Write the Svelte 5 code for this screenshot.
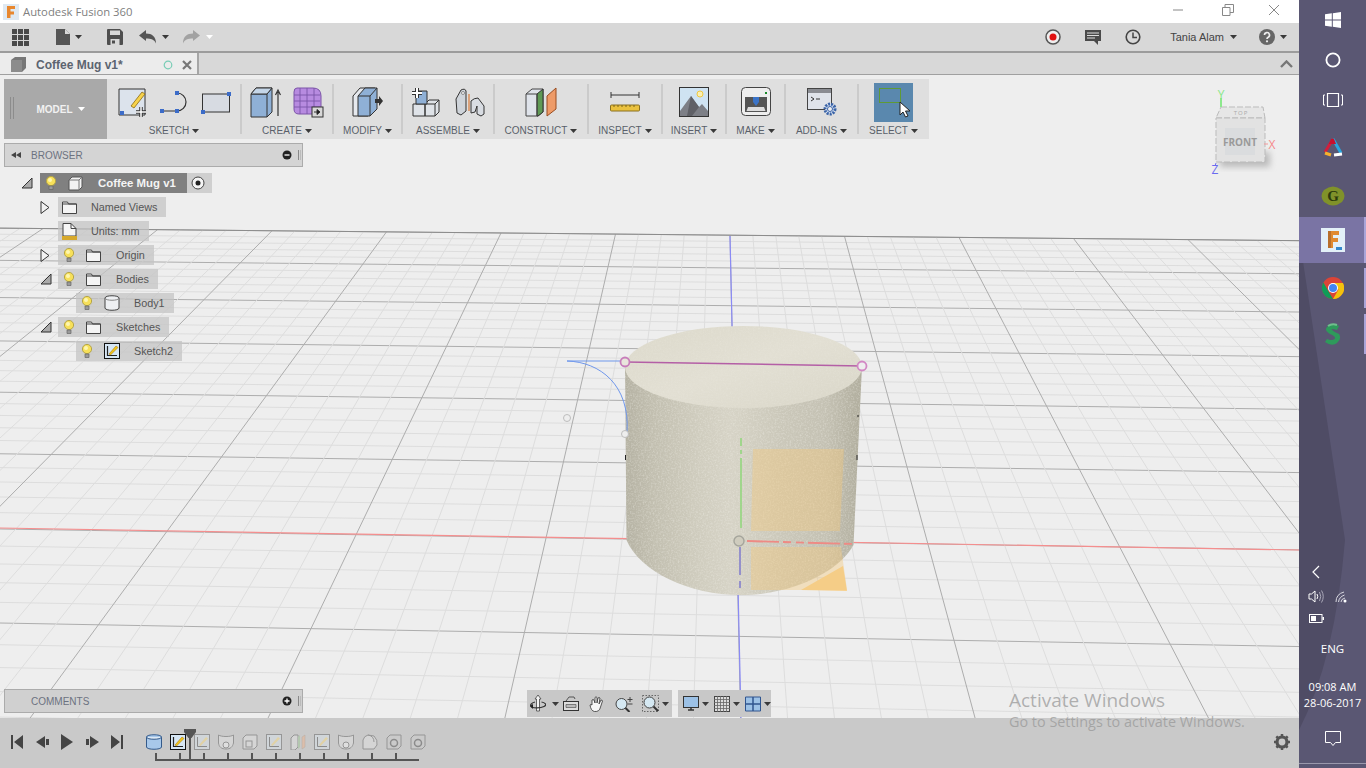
<script lang="ts">
  interface TreeRow {
    name: string
    depth: number
    twist?: 'open' | 'closed'
    bulb?: boolean
    icon: 'folder' | 'units' | 'body' | 'sketch'
  }

  const tree: TreeRow[] = [
    { name: 'Named Views', depth: 1, twist: 'closed', icon: 'folder' },
    { name: 'Units: mm', depth: 1, icon: 'units' },
    { name: 'Origin', depth: 1, twist: 'closed', bulb: true, icon: 'folder' },
    { name: 'Bodies', depth: 1, twist: 'open', bulb: true, icon: 'folder' },
    { name: 'Body1', depth: 2, bulb: true, icon: 'body' },
    { name: 'Sketches', depth: 1, twist: 'open', bulb: true, icon: 'folder' },
    { name: 'Sketch2', depth: 2, bulb: true, icon: 'sketch' }
  ]

  const futureSteps = ['sketch', 'revolve', 'plane', 'sketch', 'construct', 'sketch', 'revolve', 'fillet', 'emboss', 'emboss']

  // floor grid: everything runs to one vanishing point above the view
  const vpX = 720
  const vpY = -223

  function rowY(n: number, x: number) {
    const right = vpY + 1 / (0.0021566 - 0.0001438 * n)
    const slope = (right - vpY) / 48000
    return right - slope * (1300 - x)
  }

  const rows: { y1: number; y2: number; major: boolean }[] = []
  for (let i = 0; i <= 45; i++) {
    const n = i / 5
    rows.push({ y1: rowY(n, -10), y2: rowY(n, 1310), major: i % 5 === 0 })
  }

  const cols: { x1: number; y1: number; x2: number; y2: number; major: boolean }[] = []
  for (let i = -40; i <= 30; i++) {
    const top = 730 + (114.5 * i) / 5
    const y1 = rowY(0, top)
    const k = (718 - vpY) / (y1 - vpY)
    cols.push({ x1: top, y1, x2: vpX + (top - vpX) * k, y2: 718, major: i % 5 === 0 })
  }
</script>

{#snippet caret(dark = false)}
  <svg class="caret" class:dark viewBox="0 0 7 4" width="7" height="4"><path d="M0 0h7L3.500 4z" /></svg>
{/snippet}

{#snippet bulb()}
  <svg viewBox="0 0 14 17" width="14" height="17">
    <circle cx="7" cy="6" r="4.600" fill="#f7e05a" stroke="#b5a548" />
    <circle cx="6" cy="5" r="2" fill="#fdf6b0" />
    <path d="M5 11h4v3.500H5z" fill="#9a9a9a" stroke="#666" stroke-width=".7" />
  </svg>
{/snippet}

{#snippet folder()}
  <svg viewBox="0 0 15 13" width="15" height="13">
    <path d="M.5 1h5l1 2h8v9.500H.5z" fill="#f4f4f4" stroke="#444" />
    <path d="M.5 3h14" stroke="#444" />
  </svg>
{/snippet}

{#snippet sketchIcon(w = 16)}
  <svg viewBox="0 0 16 16" width={w} height={w}>
    <rect x=".5" y=".5" width="15" height="15" fill="#d6e6f4" stroke="#111" />
    <path d="M3.500 3v9.500H13" fill="none" stroke="#222" stroke-width="1.200" />
    <path d="M5 11l7-8 2 1.500-7.500 7.500z" fill="#f5c518" stroke="#a67c10" stroke-width=".6" />
  </svg>
{/snippet}

<div class="screen">
  <div class="main">
    <div class="titlebar">
      <svg class="app-logo" viewBox="0 0 16 16" width="16" height="16">
        <rect width="16" height="16" fill="#dfe9f2" />
        <path d="M4 2h8v3H7.500v2.500H11v3H7.500V14H4z" fill="#e8872e" />
      </svg>
      <span class="title">Autodesk Fusion 360</span>
      <div class="winctl">
        <svg viewBox="0 0 12 12" width="12" height="12"><path d="M1 6h10" stroke="#888" /></svg>
        <svg viewBox="0 0 12 12" width="12" height="12"><path d="M.5 3.500h7.500v8H.5zM3 3.500V.5h8.500v8H8" fill="none" stroke="#888" /></svg>
        <svg viewBox="0 0 12 12" width="12" height="12"><path d="M1 1l10 10M11 1L1 11" stroke="#888" /></svg>
      </div>
    </div>

    <div class="appbar">
      <div class="appbar-left">
        <svg class="a-grid" viewBox="0 0 17 17" width="17" height="17">
          <path d="M0 0h5v5H0zM6 0h5v5H6zM12 0h5v5h-5zM0 6h5v5H0zM6 6h5v5H6zM12 6h5v5h-5zM0 12h5v5H0zM6 12h5v5H6zM12 12h5v5h-5z" fill="#4a4a4a" />
        </svg>
        <div class="a-file">
          <svg viewBox="0 0 14 16" width="14" height="16"><path d="M0 0h9l5 5v11H0z" fill="#555" /><path d="M9 0v5h5" fill="#d8d8d8" /></svg>
          {@render caret(true)}
        </div>
        <svg class="a-save" viewBox="0 0 16 16" width="16" height="16">
          <path d="M1 0h12l3 3v12a1 1 0 0 1-1 1H1a1 1 0 0 1-1-1V1a1 1 0 0 1 1-1z" fill="#4e4e4e" />
          <path d="M3 1.500h10v4.500H3zM3.500 10h9v6h-9z" fill="#d8d8d8" />
          <path d="M5 11.500h3v3H5z" fill="#4e4e4e" />
        </svg>
        <div class="a-undo">
          <svg viewBox="0 0 17 14" width="17" height="14"><path d="M0 5.500L7 0v3.500c6 0 10 3 10 10-1.500-4-5-5-10-5V11z" fill="#555" /></svg>
          {@render caret(true)}
        </div>
        <div class="a-redo">
          <svg viewBox="0 0 17 14" width="17" height="14"><path d="M17 5.500L10 0v3.500c-6 0-10 3-10 10 1.500-4 5-5 10-5V11z" fill="#a2a2a2" /></svg>
          <svg class="caret" viewBox="0 0 7 4" width="7" height="4"><path d="M0 0h7L3.500 4z" fill="#999" /></svg>
        </div>
      </div>
      <div class="appbar-right">
        <svg viewBox="0 0 16 16" width="16" height="16"><circle cx="8" cy="8" r="7" fill="#eee" stroke="#555" stroke-width="1.500" /><circle cx="8" cy="8" r="3.500" fill="#e01010" /></svg>
        <svg class="a-chat" viewBox="0 0 16 15" width="16" height="15"><path d="M0 0h16v11h-3v4l-4-4H0z" fill="#4a4a4a" /><path d="M2 3h12M2 5.500h12M2 8h8" stroke="#ddd" /></svg>
        <svg class="a-clock" viewBox="0 0 16 16" width="16" height="16"><circle cx="8" cy="8" r="6.800" fill="none" stroke="#444" stroke-width="1.600" /><path d="M8 3.500V8.500h4" fill="none" stroke="#444" stroke-width="1.500" /></svg>
        <span class="user">Tania Alam</span>
        {@render caret(true)}
        <svg class="a-help" viewBox="0 0 16 16" width="16" height="16"><circle cx="8" cy="8" r="8" fill="#666" /><path d="M5.500 6a2.500 2.500 0 1 1 3.700 2.200C8.300 8.700 8 9.200 8 10" fill="none" stroke="#eee" stroke-width="1.700" /><circle cx="8" cy="12.300" r="1.100" fill="#eee" /></svg>
        {@render caret(true)}
      </div>
    </div>

    <div class="tabrow">
      <div class="tab">
        <svg viewBox="0 0 17 16" width="17" height="16">
          <path d="M1 3l4-3h11v11l-4 4H1z" fill="#777" />
          <path d="M1 3h11v12H1z" fill="#8c8c8c" />
        </svg>
        <span class="tab-name">Coffee Mug v1*</span>
        <svg class="tab-dot" viewBox="0 0 10 10" width="10" height="10"><circle cx="5" cy="5" r="3.800" fill="none" stroke="#79cdb6" stroke-width="1.200" /></svg>
        <svg class="tab-x" viewBox="0 0 10 10" width="10" height="10"><path d="M1 1l8 8M9 1L1 9" stroke="#777" stroke-width="2.200" /></svg>
      </div>
      <svg class="tab-up" viewBox="0 0 13 8" width="13" height="8"><path d="M1 7l5.500-5.500L12 7" fill="none" stroke="#777" stroke-width="2.400" /></svg>
    </div>

    <div class="viewport">
      <svg class="scene" viewBox="0 75 1300 643" width="1300" height="643">
        <defs>
          <linearGradient id="wall" x1="0" x2="1" y1="0" y2="0">
            <stop offset="0" stop-color="#b5b2a3" />
            <stop offset=".12" stop-color="#c2bfb0" />
            <stop offset=".32" stop-color="#d0cdbf" />
            <stop offset=".45" stop-color="#d6d3c6" />
            <stop offset=".65" stop-color="#cbc8ba" />
            <stop offset=".85" stop-color="#c4c1b3" />
            <stop offset="1" stop-color="#b0ad9d" />
          </linearGradient>
          <linearGradient id="cap" x1="0" x2="1" y1="0" y2="1">
            <stop offset="0" stop-color="#dcd9cb" />
            <stop offset=".5" stop-color="#e2dfd3" />
            <stop offset="1" stop-color="#d9d6c8" />
          </linearGradient>
          <filter id="grain" x="0" y="0" width="100%" height="100%">
            <feTurbulence type="fractalNoise" baseFrequency=".6" numOctaves="3" seed="4" />
            <feColorMatrix values="0 0 0 0 .9 0 0 0 0 .89 0 0 0 0 .83 0 0 0 1.300 -.55" />
            <feGaussianBlur stdDeviation=".4" />
            <feComposite in2="SourceAlpha" operator="in" />
          </filter>
        </defs>

        {#each rows as r}
          <line x1="-10" y1={r.y1} x2="1310" y2={r.y2} class={r.major ? 'major' : 'minor'} />
        {/each}
        {#each cols as c}
          <line x1={c.x1} y1={c.y1} x2={c.x2} y2={c.y2} class={c.major ? 'major' : 'minor'} />
        {/each}
        <line x1="-10" y1={rows[0].y1} x2="1310" y2={rows[0].y2} stroke="#8c8c8c" />

        <line x1="0" y1="528" x2="1300" y2="550" stroke="#f58e8e" stroke-width="1.200" />
        <line x1="730" y1="236" x2="741" y2="718" stroke="#8a8af5" stroke-width="1.200" />

        <path d="M625 362L626.500 540C640 572 690 595 740 595C795 595 840 570 853.500 545L862 366z" fill="url(#wall)" />
        <path d="M625 362L626.500 540C640 572 690 595 740 595C795 595 840 570 853.500 545L862 366z" filter="url(#grain)" opacity=".6" />
        <ellipse cx="743.500" cy="367" rx="118.500" ry="41" fill="url(#cap)" />
        <ellipse cx="743.500" cy="367" rx="118.500" ry="41" filter="url(#grain)" opacity=".3" />

        <path d="M801 590L843 566L847 591z" fill="#f7d18f" />
        <path d="M753 449H844L840 531H751zM751 547H841L847 590H751z" fill="#f3c77c" opacity=".42" />

        <path d="M741 438V535" stroke="#8fd67a" stroke-width="1.500" stroke-dasharray="8 4 4 4 70" />
        <path d="M747 541L853 544" stroke="#ee8a84" stroke-width="1.800" stroke-dasharray="32 4 8 5 8 4" />
        <path d="M740 547V590" stroke="#8480cc" stroke-width="1.600" stroke-dasharray="28 6 7" />
        <circle cx="739" cy="541" r="5" fill="#cfccbe" stroke="#a5a59c" stroke-width="1.400" />

        <path d="M567 361H625" stroke="#6f97ec" stroke-width="1.200" />
        <path d="M567 361C600 362 630 385 627 432" fill="none" stroke="#6f97ec" />
        <path d="M625 362L862 366" stroke="#b45fa6" stroke-width="1.500" />
        <circle cx="625" cy="362" r="4.500" fill="#e9e6dc" stroke="#c77dbb" stroke-width="1.800" />
        <circle cx="862" cy="366" r="4.500" fill="#eeeeee" stroke="#d288c4" stroke-width="1.800" />
        <circle cx="567" cy="418" r="3.500" fill="none" stroke="#bdbdbd" />
        <circle cx="625" cy="434" r="3.500" fill="#eee" stroke="#bdbdbd" />
        <path d="M625.500 455v5M858 415v2M857 455v5" stroke="#222" />
      </svg>

      <div class="toolbar">
        <div class="model"><span class="grip"></span>MODEL {@render caret()}</div>

        <div class="tgroup sketch">
          <div class="ticons">
            <svg viewBox="0 0 30 30" width="30" height="30">
              <path d="M2 2h26v26H2z" fill="#dce3ec" stroke="#333" />
              <path d="M14 19l11-14 3 2-11 14z" fill="#f7d24a" stroke="#8a6a12" stroke-width=".8" />
              <rect x="3" y="24" width="4" height="4" fill="#3c6cc8" />
              <path d="M19 25h10M24 20v10" stroke="#333" stroke-width="3.500" />
              <path d="M19 25h10M24 20v10" stroke="#fff" stroke-width="1.500" />
            </svg>
            <svg viewBox="0 0 30 30" width="30" height="30">
              <path d="M3 24h15M18 6a9 9 0 0 1 0 18" fill="none" stroke="#333" stroke-width="1.200" />
              <rect x="1" y="22" width="4" height="4" fill="#3c6cc8" />
              <rect x="16" y="22" width="4" height="4" fill="#3c6cc8" />
              <rect x="16" y="4" width="4" height="4" fill="#3c6cc8" />
            </svg>
            <svg viewBox="0 0 30 30" width="30" height="30">
              <rect x="1.500" y="7" width="27" height="18" fill="#d7dbe2" stroke="#333" />
              <rect x="26" y="5" width="4" height="4" fill="#3c6cc8" />
              <rect x="0" y="23" width="4" height="4" fill="#3c6cc8" />
            </svg>
          </div>
          <span class="tlabel">SKETCH {@render caret(true)}</span>
        </div>

        <div class="tgroup create">
          <div class="ticons">
            <svg viewBox="0 0 31 31" width="31" height="31">
              <path d="M1 7l5-6h16v24l-5 5H1z" fill="#8fb0d6" stroke="#333" />
              <path d="M1 7h16v23M17 7l5-6" fill="none" stroke="#333" />
              <path d="M6 1h16l-5 6H1z" fill="#c5d6e8" stroke="#333" />
              <path d="M28 29V5M25.500 8L28 3l2.500 5" fill="none" stroke="#333" stroke-width="1.200" />
            </svg>
            <svg viewBox="0 0 31 31" width="31" height="31">
              <path d="M4 1h16q8 0 8 8v14q0 4-4 4H6q-5 0-5-5V5q0-4 3-4z" fill="#b78be0" stroke="#7c55a8" />
              <path d="M1 8h26M1 14h26M1 20h26M7 1v26M14 1v26M21 1v26" stroke="#7c55a8" stroke-width=".9" />
              <rect x="19" y="20" width="11" height="10" fill="#d8d8d8" stroke="#333" />
              <path d="M21 25h5M24 22.500l3 2.500-3 2.500z" stroke="#333" />
            </svg>
          </div>
          <span class="tlabel">CREATE {@render caret(true)}</span>
        </div>

        <div class="tgroup modify">
          <div class="ticons">
            <svg viewBox="0 0 31 30" width="31" height="30">
              <path d="M1 9L8 1h15v21l-7 7H1z" fill="#e6e9ee" stroke="#333" />
              <path d="M6 9l7-8h12v21l-7 7H6z" fill="#8fb0d6" stroke="#333" />
              <path d="M6 9h12v20M18 9l7-8" fill="none" stroke="#333" />
              <path d="M23 12h4V9l4 5-4 5v-3h-4z" fill="#333" />
            </svg>
          </div>
          <span class="tlabel">MODIFY {@render caret(true)}</span>
        </div>

        <div class="tgroup assemble">
          <div class="ticons">
            <svg viewBox="0 0 30 30" width="30" height="30">
              <path d="M2 17h12v12H2zM14 17l4-4h10v12l-4 4H14z" fill="#dfe3e8" stroke="#333" />
              <path d="M14 17h10v12M24 17l4-4" fill="none" stroke="#333" />
              <path d="M5 4h11v13H5z" fill="#8fb0d6" stroke="#333" />
              <path d="M1 6h10M6 1v10" stroke="#333" stroke-width="4" />
              <path d="M1 6h10M6 1v10" stroke="#fff" stroke-width="2" />
            </svg>
            <svg viewBox="0 0 30 30" width="30" height="30">
              <path d="M1 12L6 3q4-2 5 1v20l-5 4-4-2z" fill="#cfd4da" stroke="#333" />
              <path d="M16 14q3-3 7-3l6 8v8l-3 2-4-2v-8l-2 6-4 1z" fill="#d8dce2" stroke="#333" />
              <path d="M14 7v17" stroke="#d77a3a" stroke-width="1.200" />
              <circle cx="8" cy="6" r="1.500" fill="#f4f4f4" stroke="#555" stroke-width=".6" />
            </svg>
          </div>
          <span class="tlabel">ASSEMBLE {@render caret(true)}</span>
        </div>

        <div class="tgroup construct">
          <div class="ticons">
            <svg viewBox="0 0 32 30" width="32" height="30">
              <path d="M1 7l6-5h11v23l-5 4H1z" fill="#dfe3ea" stroke="#444" />
              <path d="M12 7l6-5v23l-5 4H12z" fill="#5f9a55" stroke="#333" />
              <path d="M1 7h11v22" fill="none" stroke="#444" />
              <path d="M22 9l9-8v21l-9 7z" fill="#ee9b68" stroke="#9a4d20" />
            </svg>
          </div>
          <span class="tlabel">CONSTRUCT {@render caret(true)}</span>
        </div>

        <div class="tgroup inspect">
          <div class="ticons">
            <svg viewBox="0 0 30 30" width="30" height="30">
              <path d="M1 8h28M1 5v6M29 5v6" stroke="#333" />
              <rect x=".5" y="18" width="29" height="6" rx="1" fill="#eac13e" stroke="#8a7020" />
              <path d="M4 18v2M8 18v2M12 18v2M16 18v2M20 18v2M24 18v2" stroke="#7a6518" />
            </svg>
          </div>
          <span class="tlabel">INSPECT {@render caret(true)}</span>
        </div>

        <div class="tgroup insert">
          <div class="ticons">
            <svg viewBox="0 0 30 30" width="30" height="30">
              <rect x=".5" y=".5" width="29" height="29" fill="#cfe3f2" stroke="#333" />
              <circle cx="21" cy="7" r="3" fill="#fbf0b0" stroke="#f0c840" />
              <path d="M1 29V24L12 9l8 11 3-3 6 7v5z" fill="#7d7f86" />
              <path d="M12 9l8 11-7 9H8z" fill="#5f6066" />
            </svg>
          </div>
          <span class="tlabel">INSERT {@render caret(true)}</span>
        </div>

        <div class="tgroup make">
          <div class="ticons">
            <svg viewBox="0 0 30 30" width="30" height="30">
              <rect x=".5" y=".5" width="29" height="28" rx="4" fill="#eee" stroke="#444" />
              <rect x="4" y="10" width="22" height="15" fill="#555" />
              <path d="M7 20h16l1.500 4h-19z" fill="#ddd" />
              <path d="M12 10h6v5l-3 4-3-4z" fill="#3b74c8" />
              <rect x="24" y="5" width="2" height="2" fill="#1a8a2a" />
            </svg>
          </div>
          <span class="tlabel">MAKE {@render caret(true)}</span>
        </div>

        <div class="tgroup addins">
          <div class="ticons">
            <svg viewBox="0 0 30 30" width="30" height="30">
              <rect x=".5" y="1.500" width="24" height="21" fill="#dfe3ea" stroke="#444" />
              <rect x="1" y="2" width="23" height="4" fill="#8a8c92" />
              <path d="M4 10l3 2-3 2M9 12h4" fill="none" stroke="#333" />
              <circle cx="23" cy="22" r="5" fill="#dce6f5" stroke="#3b64a8" stroke-width="3" stroke-dasharray="2 1" />
              <circle cx="23" cy="22" r="2.500" fill="#f0f0f0" stroke="#3b64a8" />
            </svg>
          </div>
          <span class="tlabel">ADD-INS {@render caret(true)}</span>
        </div>

        <div class="tgroup select">
          <div class="select-box">
            <span class="select-rect"></span>
            <svg viewBox="0 0 12 17" width="12" height="17"><path d="M1 1v13l3-3 2.500 5 2.500-1-2.500-5H11z" fill="#fff" stroke="#222" /></svg>
          </div>
          <span class="tlabel">SELECT {@render caret(true)}</span>
        </div>
      </div>

      <div class="browser">
        <div class="panel-bar">
          <svg viewBox="0 0 10 6" width="10" height="6"><path d="M5 0v6L0 3zM10 0v6L5 3z" fill="#444" /></svg>
          <span class="panel-name">BROWSER</span>
          <svg class="panel-toggle" viewBox="0 0 10 10" width="10" height="10"><circle cx="5" cy="5" r="4.500" fill="#222" /><path d="M2.500 5h5" stroke="#fff" stroke-width="1.300" /></svg>
          <span class="panel-grip"></span>
        </div>

        <div class="tree">
          <div class="tree-row root">
            <span class="twist">
              <svg viewBox="0 0 12 12" width="12" height="12"><path d="M11 1v10H1z" fill="#aaa" stroke="#333" /></svg>
            </span>
            <div class="pill">
              <div class="root-name">
                <span class="slot-bulb">{@render bulb()}</span>
                <svg class="slot-icon" viewBox="0 0 15 15" width="15" height="15"><path d="M1 4l3-3h10v10l-3 3H1z" fill="#f3f3f3" stroke="#555" /><path d="M1 4h10v10M11 4l3-3" fill="none" stroke="#777" /></svg>
                <b>Coffee Mug v1</b>
              </div>
              <svg class="radio" viewBox="0 0 14 14" width="14" height="14"><circle cx="7" cy="7" r="6" fill="#f5f5f5" stroke="#444" /><circle cx="7" cy="7" r="2.500" fill="#222" /></svg>
            </div>
          </div>

          {#each tree as row}
            <div class="tree-row" style="margin-left: {row.depth * 18}px">
              <span class="twist">
                {#if row.twist === 'open'}
                  <svg viewBox="0 0 12 12" width="12" height="12"><path d="M11 1v10H1z" fill="#aaa" stroke="#333" /></svg>
                {:else if row.twist === 'closed'}
                  <svg viewBox="0 0 10 13" width="10" height="13"><path d="M1 .5l8 6-8 6z" fill="#f2f2f2" stroke="#333" /></svg>
                {/if}
              </span>
              <div class="pill">
                {#if row.bulb}<span class="slot-bulb">{@render bulb()}</span>{/if}
                <span class="slot-icon">
                  {#if row.icon === 'folder'}
                    {@render folder()}
                  {:else if row.icon === 'units'}
                    <svg viewBox="0 0 15 17" width="15" height="17"><path d="M1 .5h8l5 5V13H1z" fill="#f6f6f6" stroke="#444" /><path d="M9 .5v5h5" fill="none" stroke="#444" /><rect y="13" width="15" height="4" fill="#d7a92c" /></svg>
                  {:else if row.icon === 'body'}
                    <svg viewBox="0 0 16 16" width="16" height="16"><path d="M1 3c0-3 14-3 14 0v10c0 3-14 3-14 0z" fill="#eef0f3" stroke="#444" /><path d="M1 3c0 3 14 3 14 0" fill="none" stroke="#888" /></svg>
                  {:else}
                    {@render sketchIcon()}
                  {/if}
                </span>
                <span class="row-name">{row.name}</span>
              </div>
            </div>
          {/each}
        </div>
      </div>

      <svg class="cube" viewBox="1205 85 75 95" width="75" height="95">
        <defs>
          <filter id="soft" x="-30%" y="-30%" width="160%" height="160%"><feGaussianBlur stdDeviation="3" /></filter>
        </defs>
        <rect x="1220" y="152" width="50" height="15" fill="#bbb" filter="url(#soft)" />
        <path d="M1221 107H1263L1265 118H1216z" fill="#e6e6e6" stroke="#bbb" stroke-dasharray="6 2" />
        <rect x="1216" y="118" width="49" height="44" fill="#e2e2e2" stroke="#bbb" stroke-dasharray="6 2" />
        <rect x="1225" y="128" width="30" height="27" fill="#dadcde" />
        <text x="1240" y="146" class="cube-front">FRONT</text>
        <text x="1241" y="115" class="cube-top">TOP</text>
        <path d="M1221 98v9" stroke="#8de88d" stroke-width="2" />
        <path d="M1264 144h4" stroke="#f29a9a" />
        <path d="M1216 163l-1 3" stroke="#7070f0" />
        <text x="1221" y="99" class="axis y">Y</text>
        <text x="1272" y="149" class="axis x">X</text>
        <text x="1215" y="174" class="axis z">Z</text>
      </svg>

      <div class="comments">
        <span class="panel-name">COMMENTS</span>
        <svg class="panel-toggle" viewBox="0 0 10 10" width="10" height="10"><circle cx="5" cy="5" r="4.500" fill="#222" /><path d="M2.500 5h5M5 2.500v5" stroke="#fff" stroke-width="1.300" /></svg>
        <span class="panel-grip"></span>
      </div>

      <div class="navbar">
        <div class="nav-group">
          <svg viewBox="0 0 16 17" width="16" height="17"><path d="M8 0l3 4H9.500v12h-3V4H5z" fill="#f4f4f4" stroke="#444" stroke-width=".8" /><path d="M5 7C1 8 0 10 1 11.500s9 2 13 0 0-4-2.500-4.500" fill="none" stroke="#333" stroke-width="1.200" /><path d="M0 11l3 3v-5z" fill="#222" /></svg>
          {@render caret(true)}
          <svg class="gap6" viewBox="0 0 16 15" width="16" height="15"><rect x=".5" y="5.500" width="15" height="9" fill="#ddd" stroke="#333" /><path d="M3 8.500h10v3H3z" fill="#bbb" stroke="#555" stroke-width=".7" /><path d="M3 5l3-4h5l1 2" fill="none" stroke="#555" /></svg>
          <svg class="gap10" viewBox="0 0 16 16" width="16" height="16"><path d="M3 9V4q1-1 2 0l1 3V1.500q1-1.500 2 0V7l1-5q1-1 2 0l-1 6 2-4q1.500 0 1.500 1l-2 6q-1 5-6 4.500Q2 15 1 9 2 8 3 9z" fill="#f6f6f6" stroke="#333" stroke-width=".8" /></svg>
          <svg class="gap10" viewBox="0 0 18 16" width="18" height="16"><circle cx="6.500" cy="8" r="5.500" fill="#d5e8f2" stroke="#444" /><path d="M10.500 12l4 4" stroke="#333" stroke-width="2" /><path d="M15 1v5M12.500 3.500h5M12.500 8h5" stroke="#444" /></svg>
          <svg class="gap9" viewBox="0 0 17 17" width="17" height="17"><rect x=".5" y=".5" width="16" height="16" fill="none" stroke="#666" stroke-dasharray="1.500 1.500" /><circle cx="7.500" cy="7.500" r="5.500" fill="#d5e8f2" stroke="#444" /><path d="M11.500 11.500l4.500 4.500" stroke="#333" stroke-width="2" /></svg>
          {@render caret(true)}
        </div>
        <div class="nav-group second">
          <svg viewBox="0 0 16 16" width="16" height="16"><rect x=".5" y=".5" width="15" height="11" fill="#9cc1e6" stroke="#333" /><path d="M5 14h6M8 12v2" stroke="#333" stroke-width="1.500" /></svg>
          {@render caret(true)}
          <svg class="gap6" viewBox="0 0 16 16" width="16" height="16"><rect x=".5" y=".5" width="15" height="15" fill="#dcdcdc" stroke="#444" /><path d="M3.500 0v16M6.500 0v16M9.500 0v16M12.500 0v16M0 3.500h16M0 6.500h16M0 9.500h16M0 12.500h16" stroke="#666" stroke-width=".8" /></svg>
          {@render caret(true)}
          <svg class="gap6" viewBox="0 0 16 16" width="16" height="16"><path d="M.5 1h15v14H.5z" fill="#9cc1e6" stroke="#30558f" /><path d="M.5 8h15M8 1v14" stroke="#30558f" stroke-width="1.500" /></svg>
          {@render caret(true)}
        </div>
      </div>
    </div>

    <div class="timeline">
      <div class="tl-controls">
        <svg viewBox="0 0 12 14" width="12" height="14"><path d="M0 0h2v14H0zM12 0v14L3 7z" fill="#444" /></svg>
        <svg viewBox="0 0 13 12" width="13" height="12"><path d="M9 0v12L0 6zM10 3h3v6h-3z" fill="#444" /></svg>
        <svg viewBox="0 0 12 16" width="12" height="16"><path d="M0 0l12 8-12 8z" fill="#444" /></svg>
        <svg viewBox="0 0 13 12" width="13" height="12"><path d="M4 0v12l9-6zM0 3h3v6H0z" fill="#444" /></svg>
        <svg viewBox="0 0 12 14" width="12" height="14"><path d="M10 0h2v14h-2zM0 0v14l9-7z" fill="#444" /></svg>
      </div>

      <div class="tl-track">
        <div class="tl-steps">
          <svg viewBox="0 0 16 16" width="16" height="16"><path d="M.500 3c0-3 15-3 15 0v10c0 3-15 3-15 0z" fill="#a8c8ea" stroke="#345a8a" /><path d="M.500 3c0 3 15 3 15 0" fill="#dbe8f5" stroke="#345a8a" /></svg>
          {@render sketchIcon()}
          {#each futureSteps as step}
            <svg class="future" viewBox="0 0 16 16" width="16" height="16">
              {#if step === 'sketch'}
                <rect x=".5" y=".5" width="15" height="15" fill="#d5dde4" stroke="#777" />
                <path d="M3.500 3v9.500H13" fill="none" stroke="#666" />
                <path d="M5 11l7-8 2 1.500-7.500 7.500z" fill="#f0d890" />
              {:else if step === 'revolve'}
                <path d="M.5 1c3 2 12 2 15 0v8c-1 4-3 6-7.500 6S1 13 .5 9z" fill="#ddd" stroke="#777" />
                <circle cx="8" cy="11" r="3" fill="#eee" stroke="#777" />
              {:else if step === 'plane'}
                <path d="M1 4l3-3h11v11l-3 3H1z" fill="#ddd" stroke="#777" />
                <rect x="4" y="7" width="6" height="6" fill="none" stroke="#777" />
              {:else if step === 'construct'}
                <path d="M1 4l3-3h4v12l-3 3H1z" fill="#ddd" stroke="#777" />
                <path d="M8 3l2-2v12l-2 2z" fill="#a6c6a0" />
                <path d="M12 3l3-2v12l-3 2z" fill="#e8b89a" stroke="#a98" stroke-width=".5" />
              {:else if step === 'fillet'}
                <path d="M1 6q1-4 5-5l6 1q4 4 3 9l-3 4H1z" fill="#ddd" stroke="#777" />
                <path d="M6 1q6 1 6 7" fill="none" stroke="#777" />
              {:else}
                <path d="M1 4l3-3h11v11l-3 3H1z" fill="#ccc" stroke="#777" />
                <circle cx="8" cy="9" r="3.500" fill="none" stroke="#666" stroke-width="1.500" />
              {/if}
            </svg>
          {/each}
        </div>
        <div class="tl-ruler"></div>
        <svg class="tl-marker" viewBox="0 0 12 31" width="12" height="31"><path d="M0 0h12v3l-4.500 6H7v22H5V9h-.5L0 3z" fill="#555" /></svg>
      </div>

      <svg class="tl-gear" viewBox="0 0 16 16" width="16" height="16">
        <circle cx="8" cy="8" r="5" fill="none" stroke="#555" stroke-width="3.200" />
        <path d="M8 0v16M0 8h16M2.300 2.300l11.400 11.400M13.700 2.300L2.300 13.700" stroke="#555" stroke-width="2.500" stroke-dasharray="3 10 3" />
      </svg>
    </div>

    <div class="activate">
      <div class="act-big">Activate Windows</div>
      <div class="act-small">Go to Settings to activate Windows.</div>
    </div>
  </div>

  <aside class="taskbar">
    <svg class="wedge" viewBox="0 0 67 768" width="67" height="768"><path d="M0 235L46 540Q36 660 0 730z" fill="#4f4c65" /></svg>

    <div class="tb-item h40">
      <svg viewBox="0 0 16 16" width="16" height="16"><path d="M0 2.300L6.800 1.300V7.500H0zM7.800 1.200L16 0V7.500H7.800zM0 8.500H6.800V14.700L0 13.700zM7.800 8.500H16V16L7.800 14.800z" fill="#fff" /></svg>
    </div>
    <div class="tb-item h40">
      <svg viewBox="0 0 16 16" width="16" height="16"><circle cx="8" cy="8" r="6.600" fill="none" stroke="#fff" stroke-width="1.800" /></svg>
    </div>
    <div class="tb-item h40">
      <svg viewBox="0 0 20 14" width="20" height="14"><path d="M4.500.5h11v13h-11z" fill="none" stroke="#fff" stroke-width="1.200" /><path d="M2 2H.5v10H2M18 2h1.500v10H18" fill="none" stroke="#fff" /></svg>
    </div>
    <div class="tb-item h52">
      <svg viewBox="0 0 22 21" width="22" height="21">
        <path d="M11 2L3 15" stroke="#d21f3c" stroke-width="3" />
        <path d="M11 2l8 14" stroke="#27a7e0" stroke-width="3" />
        <path d="M3 16l6 2" stroke="#f6b02c" stroke-width="3" />
        <path d="M12 18l8-1" stroke="#fff" stroke-width="3" />
        <path d="M9 2l-2 5h7l-2-5z" fill="#c8102e" />
      </svg>
    </div>
    <div class="tb-item h44">
      <svg viewBox="0 0 24 22" width="24" height="22">
        <path d="M3 5q9-7 18 0 5 6 0 12-9 7-18 0-5-6 0-12z" fill="#80922a" />
        <text x="12" y="16" class="g-logo">G</text>
      </svg>
    </div>
    <div class="tb-item active">
      <svg viewBox="0 0 24 24" width="24" height="24">
        <rect width="24" height="24" fill="#e3f0f8" />
        <path d="M7 3h11v4h-6v3h5v4h-5v6H7z" fill="#e08a30" />
        <path d="M7 3h3v17H7z" fill="#b8702c" />
        <rect x="15" y="19" width="6" height="3" fill="#3388cc" />
      </svg>
    </div>
    <div class="tb-item h46 mark">
      <svg viewBox="0 0 22 22" width="22" height="22">
        <circle cx="11" cy="11" r="11" fill="#db4437" />
        <path d="M11 22A11 11 0 0 1 1.400 5.500L6 13.500l5 8.500z" fill="#0f9d58" />
        <path d="M11 22l5.500-9.500L11 6h10a11 11 0 0 1-10 16z" fill="#f4c20d" />
        <circle cx="11" cy="11" r="5" fill="#fff" />
        <circle cx="11" cy="11" r="4" fill="#4285f4" />
      </svg>
    </div>
    <div class="tb-item h46 mark s-item">
      <svg viewBox="0 0 16 22" width="16" height="22">
        <path d="M14 3Q8-1 3 3T5 11q5 2 5 4T5 17l-3-1-2 3q7 5 12 1t2-9Q9 9 7 7t5 0z" fill="#2e9a5b" />
        <path d="M3 3Q7 0 12 2" fill="none" stroke="#6fbf8c" stroke-width="2" />
      </svg>
    </div>

    <div class="tray">
      <svg class="chev" viewBox="0 0 8 14" width="8" height="14"><path d="M7 1L1 7l6 6" fill="none" stroke="#fff" stroke-width="1.200" /></svg>
      <div class="tray-row">
        <svg viewBox="0 0 16 13" width="16" height="13"><path d="M1 4h2.500L7 1v11L3.500 9H1z" fill="none" stroke="#fff" /><path d="M9 4q1.500 2.500 0 5" fill="none" stroke="#fff" /><path d="M11.500 2q2.500 4.500 0 9M13.500 .5q3.500 6 0 12" fill="none" stroke="#aaa8b8" /></svg>
        <svg viewBox="0 0 13 13" width="13" height="13"><path d="M1 12Q1 4 9 2M3.500 12Q4 7 9.500 5M6 12q0-3 4-4" fill="none" stroke="#d8d8e0" /><circle cx="10" cy="11" r="1.500" fill="#fff" /></svg>
      </div>
      <svg class="batt" viewBox="0 0 15 9" width="15" height="9"><rect x=".5" y=".5" width="12.500" height="8" fill="none" stroke="#fff" /><rect x="2" y="2" width="5" height="5" fill="#fff" /><rect x="13.500" y="3" width="1.500" height="3" fill="#fff" /></svg>
      <span class="eng">ENG</span>
      <div class="clock"><span>09:08 AM</span><span>28-06-2017</span></div>
      <svg class="notif" viewBox="0 0 16 15" width="16" height="15"><path d="M.5.5h15v11h-5l-2.500 3-2.500-3h-5z" fill="none" stroke="#fff" /></svg>
      <div class="tb-rule"></div>
    </div>
  </aside>
</div>

<style>
  :global(body) {
    margin: 0;
    overflow: hidden;
    background: #eee;
  }
  .screen {
    display: flex;
    width: 1366px;
    height: 768px;
    overflow: hidden;
    font-family: "Liberation Sans", Arial, sans-serif;
  }
  .main {
    position: relative;
    display: flex;
    flex-direction: column;
    width: 1299px;
    flex-shrink: 0;
  }
  svg {
    display: block;
    flex-shrink: 0;
  }
  .caret path { fill: #fff; }
  .caret.dark path { fill: #3a3a3a; }

  /* title bar */
  .titlebar {
    display: flex;
    align-items: center;
    height: 23px;
    background: #fff;
    flex-shrink: 0;
  }
  .app-logo { margin-left: 3px; }
  .title {
    margin-left: 4px;
    font: 11.300px "Open Sans", sans-serif;
    color: #808080;
  }
  .winctl {
    display: flex;
    margin-left: auto;
    margin-right: 19px;
    margin-top: -4px;
  }
  .winctl svg:nth-child(2) { margin: 0 34px 0 38px; }

  /* app bar */
  .appbar {
    display: flex;
    align-items: center;
    justify-content: space-between;
    height: 28px;
    background: #d8d8d8;
    border-bottom: 2px solid #9c9c9c;
    flex-shrink: 0;
  }
  .appbar-left, .appbar-right {
    display: flex;
    align-items: center;
  }
  .a-grid { margin-left: 12px; }
  .a-file {
    display: flex;
    align-items: center;
    gap: 5px;
    margin-left: 27px;
  }
  .a-save { margin-left: 25px; }
  .a-undo, .a-redo {
    display: flex;
    align-items: center;
    gap: 6px;
  }
  .a-undo { margin-left: 16px; }
  .a-redo { margin-left: 14px; }
  .appbar-right { margin-right: 12px; }
  .a-chat { margin-left: 24px; }
  .a-clock { margin-left: 24px; }
  .user {
    margin-left: 29px;
    margin-right: 6px;
    font: 11px "Liberation Sans", sans-serif;
    color: #444;
  }
  .a-help { margin-left: 22px; margin-right: 5px; }

  /* tabs */
  .tabrow {
    display: flex;
    align-items: stretch;
    justify-content: space-between;
    height: 21px;
    background: #d8d8d8;
    border-bottom: 1px solid #a0a0a0;
    flex-shrink: 0;
  }
  .tab {
    display: flex;
    align-items: center;
    width: 199px;
    box-sizing: border-box;
    padding-top: 2px;
    background: #ececec;
    border-right: 2px solid #a6a6a6;
  }
  .tab > svg:first-child { margin-left: 10px; }
  .tab-name {
    margin-left: 9px;
    margin-top: 1px;
    font: bold 12px "Liberation Sans", sans-serif;
    color: #5c6470;
    white-space: nowrap;
  }
  .tab-dot { margin-left: 40px; }
  .tab-x { margin-left: 9px; }
  .tab-up {
    align-self: center;
    margin-right: 6px;
  }

  /* viewport */
  .viewport {
    position: relative;
    flex: 1;
    background: #eeeeee;
    overflow: hidden;
  }
  .scene {
    position: absolute;
    inset: 0;
  }
  .scene line.major { stroke: #adadad; stroke-width: 1; }
  .scene line.minor { stroke: #dddddd; stroke-width: 1; }

  /* ribbon */
  .toolbar {
    position: absolute;
    top: 4px;
    left: 4px;
    display: flex;
    height: 60px;
    background: #dfdfdf;
  }
  .model {
    position: relative;
    display: flex;
    align-items: center;
    justify-content: center;
    gap: 5px;
    width: 103px;
    box-sizing: border-box;
    padding-left: 10px;
    background: #a9a9a9;
    color: #f1f1f1;
    font-size: 10px;
    font-weight: bold;
  }
  .grip {
    position: absolute;
    left: 6px;
    top: 18px;
    width: 2px;
    height: 22px;
    border-left: 1px solid #8c8c8c;
    border-right: 1px solid #8c8c8c;
  }
  .tgroup {
    position: relative;
    display: flex;
    flex-direction: column;
    align-items: center;
    padding-top: 8px;
    box-sizing: border-box;
  }
  .tgroup + .tgroup::before {
    content: "";
    position: absolute;
    left: -1px;
    top: 5px;
    bottom: 5px;
    width: 2px;
    background: #cbcbcb;
  }
  .sketch { width: 134px; }
  .create { width: 92px; }
  .modify { width: 69px; }
  .assemble { width: 92px; }
  .construct { width: 94px; }
  .inspect { width: 74px; }
  .insert { width: 64px; }
  .make { width: 59px; }
  .addins { width: 73px; }
  .select { width: 71px; padding-top: 4px; }
  .ticons {
    display: flex;
    gap: 12px;
    height: 31px;
  }
  .assemble .ticons { gap: 14px; }
  .tlabel {
    display: flex;
    align-items: center;
    gap: 3px;
    margin-top: 7px;
    font-size: 10px;
    line-height: 12px;
    color: #5a5f6a;
  }
  .select-box {
    position: relative;
    width: 39px;
    height: 39px;
    margin-bottom: -4px;
    background: #5a88ae;
  }
  .select-rect {
    position: absolute;
    left: 5px;
    top: 5px;
    width: 20px;
    height: 13px;
    border: 1px solid #5f9a36;
  }
  .select-box svg {
    position: absolute;
    left: 25px;
    top: 18px;
  }

  /* browser + comments */
  .browser {
    position: absolute;
    top: 68px;
    left: 4px;
  }
  .panel-bar, .comments {
    display: flex;
    align-items: center;
    width: 299px;
    height: 24px;
    box-sizing: border-box;
    padding-left: 6px;
    background: #d4d4d4;
    border: 1px solid #ababab;
  }
  .comments {
    position: absolute;
    left: 4px;
    bottom: 5px;
    padding-left: 26px;
    background: #d0d0d0;
  }
  .panel-name {
    margin-left: 10px;
    font-size: 10px;
    color: #6c7280;
  }
  .comments .panel-name { margin-left: 0; }
  .panel-toggle { margin-left: auto; }
  .panel-grip {
    width: 1px;
    height: 10px;
    margin: 0 1px 0 6px;
    border-left: 1px solid #888;
    border-right: 1px solid #bbb;
  }
  .tree {
    display: flex;
    flex-direction: column;
    gap: 4px;
    margin-top: 6px;
    margin-left: 18px;
  }
  .tree-row {
    display: flex;
    align-items: center;
    height: 20px;
  }
  .twist {
    display: flex;
    align-items: center;
    width: 18px;
    flex-shrink: 0;
  }
  .tree-row.root .twist { margin-left: -1px; width: 19px; }
  .pill {
    display: flex;
    align-items: center;
    height: 20px;
    padding: 0 9px 0 4px;
    background: rgba(196, 196, 196, 0.72);
    font-size: 10.800px;
    color: #555;
  }
  .slot-bulb {
    width: 14px;
    margin-right: 10px;
  }
  .slot-icon {
    display: block;
    width: 15px;
    margin-right: 15px;
  }
  .row-name { white-space: nowrap; }
  .pill:not(:has(.slot-bulb)) .slot-icon { margin-right: 14px; }
  .root .pill { padding: 0 7px 0 0; }
  .root-name {
    display: flex;
    align-items: center;
    width: 147px;
    box-sizing: border-box;
    height: 20px;
    padding: 0 0 0 4px;
    background: #808080;
    color: #f4f4f4;
  }
  .root-name b { font-size: 11.400px; white-space: nowrap; }
  .radio { margin-left: 4px; }

  /* view cube */
  .cube {
    position: absolute;
    top: 10px;
    left: 1205px;
  }
  .cube-front {
    font: bold 10px "Open Sans", sans-serif;
    fill: #9a9a9a;
    text-anchor: middle;
  }
  .cube-top {
    font: 6px "Open Sans", sans-serif;
    fill: #aaa;
    text-anchor: middle;
    letter-spacing: 1px;
  }
  .axis { font: 12px "Open Sans", sans-serif; text-anchor: middle; }
  .axis.x { fill: #f58a8a; }
  .axis.y { fill: #8ae88a; }
  .axis.z { fill: #6a6af0; }

  /* nav bar */
  .navbar {
    position: absolute;
    left: 527px;
    bottom: 1px;
    display: flex;
    gap: 6px;
  }
  .nav-group {
    display: flex;
    align-items: center;
    width: 145px;
    height: 27px;
    box-sizing: border-box;
    padding-left: 3px;
    background: #c8c8c8;
  }
  .nav-group.second {
    width: 93px;
    padding-left: 5px;
  }
  .gap6 { margin-left: 4px; }
  .gap10 { margin-left: 10px; }
  .gap9 { margin-left: 9px; }
  .nav-group .caret { margin-left: 6px; }
  .nav-group .caret:last-child { margin-left: 3px; }
  .nav-group.second .caret,
  .nav-group.second .caret:last-child { margin-left: 3px; }
  .nav-group.second .gap6 { margin-left: 5px; }

  /* timeline */
  .timeline {
    position: relative;
    display: flex;
    align-items: flex-start;
    height: 50px;
    background: #c9c9c9;
    flex-shrink: 0;
  }
  .tl-controls {
    display: flex;
    align-items: center;
    gap: 12.500px;
    height: 16px;
    margin-top: 16px;
    margin-left: 11px;
  }
  .tl-track {
    position: relative;
    margin-left: 23px;
    margin-top: 16px;
  }
  .tl-steps {
    display: flex;
    gap: 8px;
  }
  .future { opacity: 0.62; }
  .tl-ruler {
    width: 264px;
    height: 6px;
    margin-top: 3px;
    margin-left: 9px;
    border-bottom: 2px solid #555;
    background: repeating-linear-gradient(90deg, #555 0 2px, transparent 2px 24px);
  }
  .tl-marker {
    position: absolute;
    left: 38px;
    top: -5px;
  }
  .tl-gear {
    margin-left: auto;
    margin-top: 16px;
    margin-right: 9px;
  }

  /* watermark */
  .activate {
    position: absolute;
    left: 1009px;
    top: 689px;
    font-family: "Open Sans", sans-serif;
    color: rgba(150, 150, 150, 0.72);
    white-space: nowrap;
    pointer-events: none;
  }
  .act-big { font-size: 19px; line-height: 22px; }
  .act-small { font-size: 14.400px; line-height: 22px; }

  /* windows taskbar */
  .taskbar {
    position: relative;
    display: flex;
    flex-direction: column;
    width: 67px;
    height: 768px;
    background: #5a5773;
    color: #fff;
    font-family: "Open Sans", sans-serif;
  }
  .wedge {
    position: absolute;
    left: 0;
    top: 0;
  }
  .tb-item {
    position: relative;
    display: flex;
    align-items: center;
    justify-content: center;
    flex-shrink: 0;
  }
  .h40 { height: 40px; }
  .h52 { height: 54px; }
  .h44 { height: 43px; }
  .h46 { height: 46px; }
  .active {
    height: 46px;
    box-sizing: border-box;
    background: #7a74a4;
    border-right: 2px solid #aaa5d8;
    padding-left: 2px;
    margin-bottom: 2px;
  }
  .mark::after {
    content: "";
    position: absolute;
    right: 0;
    top: 3px;
    bottom: 3px;
    width: 2px;
    background: #aaa5d8;
  }
  .g-logo {
    font: bold 15px "Liberation Serif", serif;
    fill: #2c3a0c;
    text-anchor: middle;
  }
  .tray {
    position: relative;
    display: flex;
    flex-direction: column;
    align-items: center;
    margin-top: auto;
    height: 203px;
    flex-shrink: 0;
  }
  .chev {
    align-self: flex-start;
    margin-left: 13px;
  }
  .tray-row {
    display: flex;
    justify-content: space-between;
    align-items: center;
    width: 40px;
    margin-top: 11px;
    margin-right: 9px;
  }
  .batt {
    align-self: flex-start;
    margin-left: 10px;
    margin-top: 11px;
  }
  .eng {
    margin-top: 18px;
    font-size: 11.500px;
    line-height: 16px;
  }
  .clock {
    display: flex;
    flex-direction: column;
    align-items: center;
    margin-top: 22px;
    font-size: 11px;
    line-height: 16px;
  }
  .notif { margin-top: 20px; }
  .tb-rule {
    position: absolute;
    left: 0;
    right: 0;
    bottom: 4px;
    height: 1px;
    background: #9a98ac;
  }
</style>
